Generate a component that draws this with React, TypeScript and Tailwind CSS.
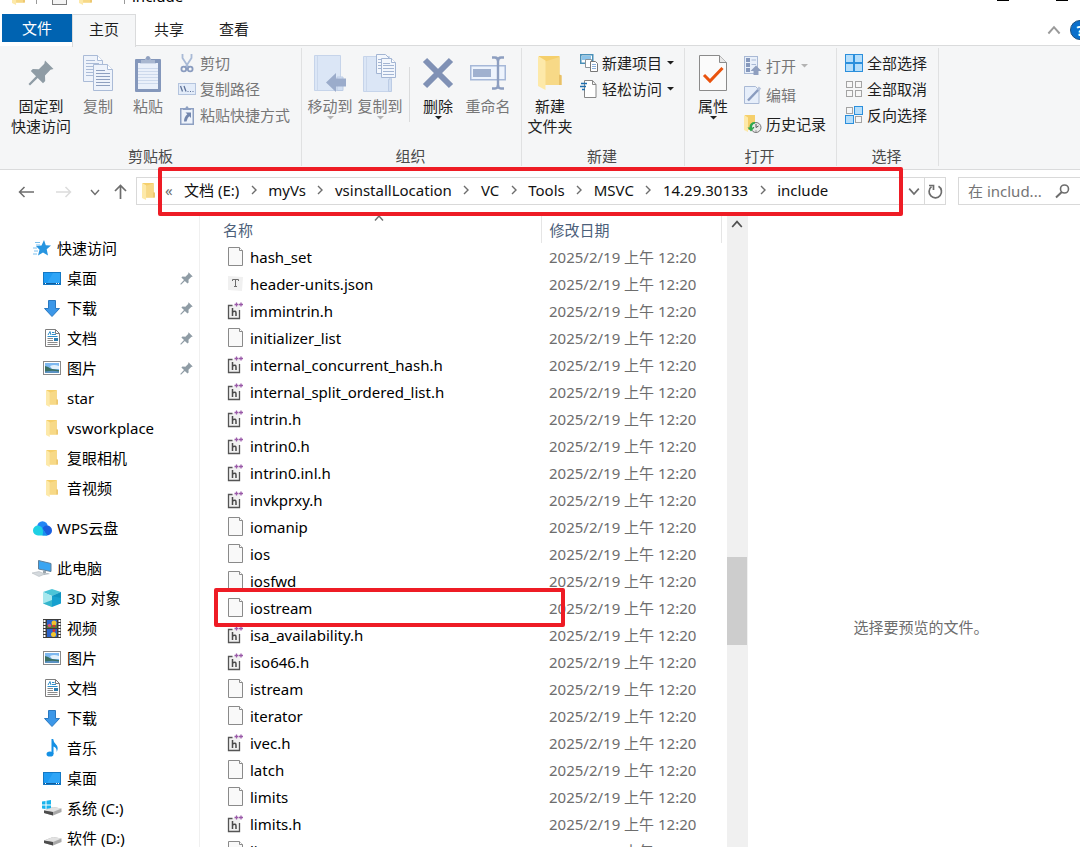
import type { ReactNode } from "react";

/* ---------- Icons ---------- */

function PinIcon({ size }: { size: number }) {
  return (
    <svg width={size} height={size} viewBox="0 0 26 26" className="shrink-0" aria-hidden="true">
      <path
        d="M17 0.5 25.5 9l-3 0.8-5.5 5.7 0.2 5.5-2.2 2.2-5.3-5.2L2 25.5 0.5 24 8 16.2 2.8 11l2-2 6 .3 5.5-5.5z"
        fill="#8f9ca5"
      />
    </svg>
  );
}

function CopyIcon() {
  return (
    <svg width="30" height="36" viewBox="0 0 30 36" aria-hidden="true">
      <g fill="#eef3fb" stroke="#aabbd7">
        <path d="M.5.5h14l5 5v21H.5z" />
        <path d="M14.5.5v5h5" fill="#fff" />
        <path d="M3 5.5h9M3 8.5h13M3 11.5h13M3 14.5h13M3 17.5h13M3 20.5h13" />
        <path d="M10.500 9.500h14l5 5v21h-19z" />
        <path d="M24.500 9.500v5h5" fill="#fff" />
        <path d="M13 15.500h9M13 18.500h14M13 21.500h14M13 24.500h14M13 27.500h14M13 30.500h14" stroke="#8ea0c0" />
      </g>
    </svg>
  );
}

function PasteIcon() {
  return (
    <svg width="26" height="37" viewBox="0 0 26 37" aria-hidden="true">
      <rect x="0" y="4" width="26" height="33" rx="1" fill="#8497bb" />
      <rect x="3" y="8" width="20" height="26" fill="#eaf0fa" />
      <path d="M3 13.500h20M3 16.500h20M3 19.500h20M3 22.500h20M3 25.500h20M3 28.500h20" stroke="#cdd9ec" />
      <path d="M6 8V5h4a3 3 0 1 1 6 0h4v3z" fill="#a9b7d0" />
      <path d="M5 8.500h16" stroke="#cfd9ea" />
      <circle cx="13" cy="3" r="2" fill="#8fa0c0" />
    </svg>
  );
}

function CutIcon() {
  return (
    <svg width="14" height="19" viewBox="0 0 14 19" aria-hidden="true">
      <path d="M2.500 0v4L9 14M11.500 0v4L5 14" fill="none" stroke="#a9bad6" strokeWidth="1.800" />
      <circle cx="3.800" cy="15" r="2.400" fill="none" stroke="#8a9cbf" strokeWidth="1.800" />
      <circle cx="10.200" cy="15" r="2.400" fill="none" stroke="#8a9cbf" strokeWidth="1.800" />
    </svg>
  );
}

function PathIcon() {
  return (
    <svg width="18" height="12" viewBox="0 0 18 12" aria-hidden="true">
      <rect x=".5" y=".5" width="17" height="11" fill="#e3ecf9" stroke="#b4c4de" />
      <path d="m2.500 3 2 5.500M6 3l2 5.500" stroke="#5f7399" strokeWidth="1.300" />
      <path d="M9.500 8.500h1M12 8.500h1M14.500 8.500h1" stroke="#5f7399" />
    </svg>
  );
}

function PasteShortcutIcon() {
  return (
    <svg width="14" height="19" viewBox="0 0 14 19" aria-hidden="true">
      <rect x=".75" y="2.750" width="12.500" height="15.500" fill="#eef3fb" stroke="#8ea0c2" strokeWidth="1.500" />
      <path d="M3 4V2.500h2.500C5.500-.5 8.500-.5 8.500 2.500H11V4z" fill="#8ea0c2" />
      <path d="M5.500 6.500H11V12L9.300 10.300Q7 12 6.500 15.500H4Q4 11 7.300 8.300z" fill="#7286ad" />
    </svg>
  );
}

function MoveToIcon() {
  return (
    <svg width="32" height="37" viewBox="0 0 32 37" aria-hidden="true">
      <path d="M.5.5h26v35H.5z" fill="#dbe6f6" stroke="#c6d4ea" />
      <path d="M3.500 1v34" stroke="#cbd8ec" />
      <path d="M23 22h6v13.500h-6z" fill="#d2dff2" stroke="#bccce5" />
      <path d="M12 27.500 22 18v5.500h10v8H22V37z" fill="#9baccb" />
    </svg>
  );
}

function CopyToIcon() {
  return (
    <svg width="34" height="38" viewBox="0 0 34 38" aria-hidden="true">
      <path d="M.5 2.500h26v35H.5z" fill="#dbe6f6" stroke="#c6d4ea" />
      <path d="M3.500 3v34" stroke="#cbd8ec" />
      <path d="M25.500 25.500l3-1v13h-3z" fill="#d2dff2" stroke="#bccce5" />
      <g fill="#f3f7fd" stroke="#a3b5d3">
        <path d="M13.500.5h9l4 4v15h-13z" />
        <path d="M15 5.500h5M15 8.500h9M15 11.500h9M15 14.500h9" />
        <path d="M18.500 4.500h10l4 4v15h-14z" />
        <path d="M28.500 4.500v4h4" fill="#fff" />
        <path d="M20 9.500h7M20 11.500h11M20 14.500h11M20 17.500h11M20 20.500h11" />
      </g>
    </svg>
  );
}

function DeleteIcon() {
  return (
    <svg width="32" height="32" viewBox="0 0 32 32" aria-hidden="true">
      <path d="m3 3 26 26M29 3 3 29" stroke="#8091b5" strokeWidth="6" />
    </svg>
  );
}

function RenameIcon() {
  return (
    <svg width="36" height="34" viewBox="0 0 36 34" aria-hidden="true">
      <rect x=".75" y="9.750" width="34.500" height="14" fill="#eef4fd" stroke="#a6b8d8" strokeWidth="1.500" />
      <rect x="3" y="13" width="18" height="8" fill="#a0b1cf" />
      <path d="M22 1.500h3q3 0 3 4v23q0 4-3 4h-3M34 1.500h-3q-3 0-3 4v23q0 4 3 4h3" fill="none" stroke="#8d9ec0" strokeWidth="2.400" />
    </svg>
  );
}

function FolderIcon({ width, height }: { width: number; height: number }) {
  return (
    <svg width={width} height={height} viewBox="0 0 24 34" preserveAspectRatio="none" className="shrink-0" aria-hidden="true">
      <path d="M1 0h20.500v18l2 2v9H1z" fill="#f5cf6b" />
      <path d="M7 5.500 21.500 1v28H7z" fill="#f7d987" />
      <path d="M21 19h2.500v10H21z" fill="#e8c069" />
      <path d="M0 0l7.500 4.500V34L0 30z" fill="#fde9a9" />
    </svg>
  );
}

function NewItemIcon() {
  return (
    <svg width="18" height="18" viewBox="0 0 18 18" aria-hidden="true">
      <rect x=".75" y=".75" width="12" height="8.500" fill="#fff" stroke="#4a90b8" strokeWidth="1.500" />
      <rect x="2" y="2" width="9" height="4" fill="#8cc4ea" />
      <path d="M5.500 5.500h6v8h-6z" fill="#fff" stroke="#8d9499" />
      <path d="M10.500 7.500h5l2 2v8h-7z" fill="#fff" stroke="#777" />
      <path d="M12 10.500h4M12 12.500h4M12 14.500h4" stroke="#8ab0dc" />
    </svg>
  );
}

function EasyAccessIcon() {
  return (
    <svg width="18" height="18" viewBox="0 0 18 18" aria-hidden="true">
      <path d="M4.500.5h8l3.500 4v13H4.500z" fill="#fff" stroke="#868686" />
      <path d="M12.500.5v4h3.500" fill="none" stroke="#868686" />
      <path d="M1 3.500h6M0 6.500h6M2 9.500h3" stroke="#1f6fb0" strokeWidth="1.300" />
    </svg>
  );
}

function PropertiesIcon() {
  return (
    <svg width="28" height="36" viewBox="0 0 28 36" aria-hidden="true">
      <path d="M.5.5h20l7 7v28H.5z" fill="#fbfbfb" stroke="#8b8b8b" />
      <path d="M20.500.5v7h7" fill="#e8e8e8" stroke="#8b8b8b" />
      <path d="m5 20 6 6L23.500 13" fill="none" stroke="#e9530e" strokeWidth="3" />
    </svg>
  );
}

function OpenIcon() {
  return (
    <svg width="18" height="19" viewBox="0 0 18 19" aria-hidden="true">
      <rect x=".5" y=".5" width="13" height="17" fill="#e9f0fa" stroke="#a9b9d5" />
      <path d="M2 2h4v4H2zM2 7h4v4H2zM2 12h4v4H2z" fill="#8699bd" />
      <path d="M7.500 4h4.500M7.500 8.500h4.500" stroke="#a9b9d5" />
      <path d="m12 9.500 5.500 5.500h-3v4h-5v-4h-3z" fill="#8f9fbf" />
    </svg>
  );
}

function EditIcon() {
  return (
    <svg width="18" height="18" viewBox="0 0 18 18" aria-hidden="true">
      <path d="M.5.500h11l3.500 3.500v13.500H.5z" fill="#e6eefa" stroke="#a9b9d5" />
      <path d="M4 14.500 14.500 3.500" stroke="#8a9cbf" strokeWidth="2.500" />
      <path d="m14 4 2-2.500" stroke="#b8c5dc" strokeWidth="3" />
    </svg>
  );
}

function HistoryIcon() {
  return (
    <svg width="18" height="18" viewBox="0 0 18 18" aria-hidden="true">
      <path d="M1 0h10v15H1z" fill="#f5cf6b" />
      <path d="M0 0l4 2.500V17L0 15z" fill="#fde9a9" />
      <circle cx="12" cy="12.500" r="5" fill="#e8e8e8" stroke="#777" />
      <path d="M12 9v3.500l2.500-1.500M9 12.500h1M12 15.500v1" fill="none" stroke="#555" />
      <path d="M11 7Q5.500 7 5.500 12.500H3.500L7 16.500l3.500-4H8Q8 9 11 8.500z" fill="#2fa84f" />
    </svg>
  );
}

function SquaresIcon({ on, all }: { on: boolean[]; all?: boolean }) {
  const spots = [
    [0, 0],
    [9, 0],
    [0, 9],
    [9, 9],
  ];
  return (
    <svg width="18" height="18" viewBox="0 0 18 18" aria-hidden="true">
      {spots.map(([x, y], i) =>
        on[i] ? (
          <rect key={i} x={x + 0.5} y={y + 0.5} width="8" height="8" fill="#b5defb" stroke="#2b8fdc" />
        ) : (
          <rect key={i} x={x + 1.5} y={y + 1.5} width="6" height="6" fill="#f7f7f7" stroke="#a3a3a3" />
        ),
      )}
      {all && <path d="M9 0v18M0 9h18" stroke="#2b8fdc" strokeWidth="2" />}
    </svg>
  );
}

function StarIcon() {
  return (
    <svg width="18" height="16" viewBox="0 0 18 16" aria-hidden="true">
      <path d="m11 0 1.800 5.300L18 5.500l-4.300 3.700L15 15.500l-5-3-5 3 1.500-5.700L3 6l5.500-.5z" fill="#2795e0" />
      <path d="M2 2.500h5M3 5h4M0 8h4M1 11h4M0 14h4" stroke="#7cc0ee" />
    </svg>
  );
}

function DesktopIcon() {
  return (
    <svg width="18" height="13" viewBox="0 0 18 13" aria-hidden="true">
      <rect x=".5" y=".5" width="17" height="12" fill="#1e9bf3" stroke="#1478c4" />
      <path d="M10 1 4 11h13V1z" fill="#3fb0fb" opacity=".5" />
      <path d="M1 11.500h16" stroke="#0f5c9c" />
      <path d="M2 11.500h1M13 11.500h1M15 11.500h1" stroke="#fff" />
    </svg>
  );
}

function DownloadIcon() {
  return (
    <svg width="16" height="17" viewBox="0 0 16 17" aria-hidden="true">
      <path d="M4.500.5h7v8h4L8 16.500.5 8.500h4z" fill="#3b97e8" stroke="#2a78c0" />
    </svg>
  );
}

function DocumentIcon() {
  return (
    <svg width="15" height="18" viewBox="0 0 15 18" aria-hidden="true">
      <path d="M.5.5h10l4 4v13H.5z" fill="#fff" stroke="#7d7d7d" />
      <path d="M10.500.5v4h4" fill="none" stroke="#7d7d7d" />
      <path d="m3 6 2-3.500L6 6M7 3.500h2.500M7 5.500h4M2.500 7.500h10" fill="none" stroke="#2f8ec9" />
      <path d="M2.500 9.500H8M2.500 11.500H8M2.500 13.500h10M2.500 15.500h10" stroke="#8b8b8b" />
      <path d="M9 9h4v3H9z" fill="#2f7fb2" />
    </svg>
  );
}

function PictureIcon() {
  return (
    <svg width="18" height="14" viewBox="0 0 18 14" aria-hidden="true">
      <rect x=".5" y=".5" width="17" height="13" fill="#fff" stroke="#8a8a8a" />
      <rect x="2" y="2" width="14" height="10" fill="#7db8f0" />
      <path d="M7 5q4-2 9 0v3H9z" fill="#e3f1fc" />
      <path d="M2 5q3 .5 6 2.800l8 1.200v3H2z" fill="#3b6f62" />
      <path d="M2 10.500q8-1.500 14 0V12H2z" fill="#5b93c4" />
    </svg>
  );
}

function CloudIcon() {
  return (
    <svg width="19" height="15" viewBox="0 0 19 15" aria-hidden="true">
      <circle cx="9.500" cy="5.500" r="5.300" fill="#2186f5" />
      <circle cx="14" cy="9.500" r="5" fill="#1a5fe0" />
      <path d="M5 4.500a5 5 0 0 0 0 10h9L8.500 6A5 5 0 0 0 5 4.500z" fill="#1ed0e4" />
      <path d="M8.500 6 14 14.500H9.500Q11 10 8.500 6z" fill="#1a8df0" />
    </svg>
  );
}

function ComputerIcon() {
  return (
    <svg width="20" height="17" viewBox="0 0 20 17" aria-hidden="true">
      <path d="m6.500.5 12.500 3v8l-12.500-2.500z" fill="#3aa5f2" stroke="#5f7f99" />
      <path d="m11 10.500 3 .7v2h-3z" fill="#9aa5ad" />
      <path d="m10 13.500 6-.5 2 1-6 1z" fill="#b5bdc3" />
      <path d="m0 13 7-1.500 6 2.500-6 2.500z" fill="#d4d9dd" stroke="#a8b0b6" strokeWidth=".5" />
    </svg>
  );
}

function CubeIcon() {
  return (
    <svg width="18" height="18" viewBox="0 0 18 18" aria-hidden="true">
      <path d="m9 0 9 3-9 4-9-4z" fill="#4cc5d8" />
      <path d="M0 3l9 4v11l-9-3.500z" fill="#a7e8ee" />
      <path d="m18 3-9 4v11l9-3.500z" fill="#16a0cf" />
      <path d="m9 7 9-4v6z" fill="#0b8bb5" opacity=".6" />
      <path d="m0 14.500 9-3.500v7z" fill="#35b5cc" />
    </svg>
  );
}

function VideoIcon() {
  return (
    <svg width="18" height="19" viewBox="0 0 18 19" aria-hidden="true">
      <rect width="18" height="19" fill="#3b3b3b" />
      <path d="M1.500 1v18M16.500 1v18" stroke="#fff" strokeWidth="2" strokeDasharray="2 1" />
      <path d="M4 1h10v8H4zM4 10h10v8H4z" fill="#2b62c9" />
      <path d="M4 6h10v3H4z" fill="#5a7d35" />
      <circle cx="11" cy="4" r="2.500" fill="#f2c62e" />
      <circle cx="6.500" cy="6.500" r="1.700" fill="#d94f7a" />
      <circle cx="11" cy="7" r="1.300" fill="#d8322a" />
      <circle cx="10.500" cy="15.500" r="2.500" fill="#f2c62e" />
      <circle cx="11" cy="11.500" r="1.500" fill="#d8322a" />
    </svg>
  );
}

function MusicIcon() {
  return (
    <svg width="13" height="18" viewBox="0 0 13 18" aria-hidden="true">
      <ellipse cx="4" cy="15" rx="3.500" ry="2.600" fill="#1490e4" />
      <path d="M5.500 15V0H7.200Q7.500 3.500 10 5.500q3 3 .7 7.500Q11 8.500 7.500 7.500V15z" fill="#1490e4" />
    </svg>
  );
}

function DriveIcon({ system }: { system?: boolean }) {
  return (
    <svg width="20" height="16" viewBox="0 0 20 16" aria-hidden="true">
      <path d="m2 10.500 9-3.500 8.500 1.500V12L11 15.500 2 13z" fill="#a9a9a9" />
      <path d="m2 10.500 9-3.500 8.500 1.500L11 12z" fill="#e2e2e2" />
      <path d="m2 10.500 9 1.500v3.500L2 13z" fill="#4c4c4c" />
      {system && <path d="M0 1.500 3.500 1v3.500H0zM4.500.8 9 0v4.500H4.500zM0 5.500h3.500V9L0 8.500zM4.500 5.500H9V8L4.500 9z" fill="#1ab4ec" />}
    </svg>
  );
}

function PlainFileIcon() {
  return (
    <svg width="15" height="19" viewBox="0 0 15 19" aria-hidden="true">
      <path d="M.5.5h11l3 3v15H.5z" fill="#f9f9f9" stroke="#8a8a8a" />
      <path d="M11.500.5v3h3" fill="#fff" stroke="#8a8a8a" />
    </svg>
  );
}

function JsonFileIcon() {
  return (
    <svg width="17" height="17" viewBox="0 0 17 17" aria-hidden="true">
      <path d="m1 1 15 1-1 14-14-1z" fill="#f0f0f0" />
      <path d="M5.500 6V4.500h6V6M8.500 4.500v7M7 11.500h3" fill="none" stroke="#6c6c6c" />
    </svg>
  );
}

function HeaderFileIcon() {
  return (
    <svg width="16" height="18" viewBox="0 0 16 18" aria-hidden="true">
      <path d="M1 3h12v14H1z" fill="#f1f1f1" />
      <path d="M5.500 3.500h-4v13h11V8" fill="none" stroke="#555555" strokeWidth="1.300" />
      <path d="M5.500 6v8M5.500 10q3.500-2 3.500 1v3" fill="none" stroke="#4a4a4a" strokeWidth="1.500" />
      <path d="M7.500 2.500h4M9.500.5v4M12 2.500h4M14 .5v4" stroke="#9a5aa8" strokeWidth="1.300" />
    </svg>
  );
}

function Chevron({ dir, size = 10, color = "#6d6d6d" }: { dir: "up" | "down" | "right"; size?: number; color?: string }) {
  const d = { up: "M1 7.500 5 3l4 4.500", down: "M1 3l4 4.500L9 3", right: "M3 1l4 4-4 4" }[dir];
  return (
    <svg width={size} height={size} viewBox="0 0 10 10" className="shrink-0" aria-hidden="true">
      <path d={d} fill="none" stroke={color} strokeWidth="1.400" />
    </svg>
  );
}

function Caret({ dim }: { dim?: boolean }) {
  return (
    <svg width="7" height="4" viewBox="0 0 7 4" className="shrink-0" aria-hidden="true">
      <path d="M0 0h7L3.500 3.500z" fill={dim ? "#b3b3b3" : "#1e1e1e"} />
    </svg>
  );
}

/* ---------- Ribbon ---------- */

function BigButton({ icon, lines, width, dim, caret }: { icon: ReactNode; lines: string[]; width: string; dim?: boolean; caret?: boolean }) {
  return (
    <button type="button" className={`flex shrink-0 flex-col items-center ${width} ${dim ? "text-[#777777]" : "text-[#1e1e1e]"}`}>
      <span className="flex h-10 items-center justify-center">{icon}</span>
      <span className="mt-[3px] flex flex-col leading-5 whitespace-nowrap">
        {lines.map((line) => (
          <span key={line}>{line}</span>
        ))}
      </span>
      {caret && <Caret dim={dim} />}
    </button>
  );
}

function SmallButton({ icon, label, dim, caret, tall }: { icon: ReactNode; label: string; dim?: boolean; caret?: boolean; tall?: boolean }) {
  return (
    <button type="button" className={`flex items-center whitespace-nowrap ${tall ? "h-[29px]" : "h-[26px]"} ${dim ? "text-[#777777]" : "text-[#1e1e1e]"}`}>
      <span className="mr-1 flex w-[18px] justify-center">{icon}</span>
      <span className="mr-[5px]">{label}</span>
      {caret && <Caret dim={dim} />}
    </button>
  );
}

function Group({ label, width, children }: { label: string; width: string; children: ReactNode }) {
  return (
    <section aria-label={label} className={`flex shrink-0 flex-col border-r border-[#e0e1e2] ${width}`}>
      <div className="flex flex-1">{children}</div>
      <h2 className="pr-[2px] text-center leading-5 text-[#4a4a4a]">{label}</h2>
    </section>
  );
}

function Ribbon() {
  return (
    <div className="flex h-[124px] shrink-0 border-b border-[#dadbdc] bg-[#f5f6f7] pt-[2px] pb-[3px] pl-[2px]">
      <Group label="剪贴板" width="w-[300px]">
        <div className="flex pt-[5px] pl-[5px]">
          <BigButton icon={<PinIcon size={26} />} lines={["固定到", "快速访问"]} width="w-[68px]" />
          <BigButton icon={<CopyIcon />} lines={["复制"]} width="w-[46px]" dim />
          <BigButton icon={<PasteIcon />} lines={["粘贴"]} width="w-[54px]" dim />
        </div>
        <div className="ml-[3px] flex flex-col pt-[2px]">
          <SmallButton icon={<CutIcon />} label="剪切" dim />
          <SmallButton icon={<PathIcon />} label="复制路径" dim />
          <SmallButton icon={<PasteShortcutIcon />} label="粘贴快捷方式" dim />
        </div>
      </Group>
      <Group label="组织" width="w-[220px]">
        <div className="flex pt-[5px] pl-[3px]">
          <BigButton icon={<MoveToIcon />} lines={["移动到"]} width="w-[50px]" dim caret />
          <BigButton icon={<CopyToIcon />} lines={["复制到"]} width="w-[50px]" dim caret />
          <div className="mr-[3px] ml-1 mt-[14px] h-[55px] w-px bg-[#dadbdc]" />
          <BigButton icon={<DeleteIcon />} lines={["删除"]} width="w-[50px]" caret />
          <BigButton icon={<RenameIcon />} lines={["重命名"]} width="w-[50px]" dim />
        </div>
      </Group>
      <Group label="新建" width="w-[163px]">
        <div className="flex pt-[5px] pl-[2px]">
          <BigButton icon={<FolderIcon width={24} height={34} />} lines={["新建", "文件夹"]} width="w-[52px]" />
        </div>
        <div className="ml-1 flex flex-col pt-[2px]">
          <SmallButton icon={<NewItemIcon />} label="新建项目" caret />
          <SmallButton icon={<EasyAccessIcon />} label="轻松访问" caret />
        </div>
      </Group>
      <Group label="打开" width="w-[152px]">
        <div className="flex pt-[5px] pl-1">
          <BigButton icon={<PropertiesIcon />} lines={["属性"]} width="w-[48px]" caret />
        </div>
        <div className="ml-[7px] flex flex-col pt-[3px]">
          <SmallButton icon={<OpenIcon />} label="打开" dim caret tall />
          <SmallButton icon={<EditIcon />} label="编辑" dim tall />
          <SmallButton icon={<HistoryIcon />} label="历史记录" tall />
        </div>
      </Group>
      <Group label="选择" width="w-[102px]">
        <div className="ml-2 flex flex-col pt-[2px]">
          <SmallButton icon={<SquaresIcon on={[true, true, true, true]} all />} label="全部选择" />
          <SmallButton icon={<SquaresIcon on={[false, false, false, false]} />} label="全部取消" />
          <SmallButton icon={<SquaresIcon on={[false, true, true, false]} />} label="反向选择" />
        </div>
      </Group>
    </div>
  );
}

/* ---------- Title and tabs ---------- */

function TitleBar() {
  return (
    <header className="flex h-[14px] shrink-0 items-end overflow-hidden">
      <div className="flex h-9 w-full shrink-0 items-center pl-3 text-black">
        <FolderIcon width={13} height={17} />
        <span className="ml-[11px] h-4 w-px bg-[#9a9a9a]" />
        <span className="ml-[15px] h-[18px] w-[15px] border border-[#7d7d7d] bg-[#f4f4f4]" />
        <span className="ml-3">
          <FolderIcon width={13} height={17} />
        </span>
        <span className="ml-8 h-4 w-px bg-[#9a9a9a]" />
        <h1 className="ml-[7px] leading-5">include</h1>
        <span className="mr-[47px] ml-auto mt-[9px] h-px w-3 bg-black" />
        <span className="mr-3 h-[10px] w-3 border border-black" />
      </div>
    </header>
  );
}

function Tabs() {
  return (
    <nav aria-label="功能区" className="flex h-8 shrink-0 pl-[2px]">
      <button type="button" className="h-7 w-[70px] bg-[#0063b1] text-white">
        文件
      </button>
      <button type="button" className="z-10 -mb-px w-[64px] border border-b-0 border-[#dadbdc] bg-[#f5f6f7] pb-1 text-[#1e1e1e]">
        主页
      </button>
      <div className="flex flex-1 items-center border-b border-[#dadbdc] text-[#1e1e1e]">
        <button type="button" className="w-[66px] pb-[2px]">
          共享
        </button>
        <button type="button" className="w-[64px] pb-[2px]">
          查看
        </button>
        <button type="button" aria-label="最小化功能区" className="mr-[9px] ml-auto">
          <Chevron dir="up" size={14} color="#9a9a9a" />
        </button>
        <button type="button" aria-label="帮助" className="-mr-[10px] flex h-5 w-5 shrink-0 items-center justify-center rounded-full border border-[#1b4f7d] bg-[#0a6fcb] font-bold text-white">
          ?
        </button>
      </div>
    </nav>
  );
}

/* ---------- Address row ---------- */

const crumbs = ["文档 (E:)", "myVs", "vsinstallLocation", "VC", "Tools", "MSVC", "14.29.30133", "include"];

function AddressRow() {
  return (
    <div className="flex h-[46px] shrink-0 items-start pt-[7px]">
      <div className="flex h-[29px] w-[136px] shrink-0 items-center pl-[18px]">
        <button type="button" aria-label="后退">
          <svg width="16" height="12" viewBox="0 0 16 12" aria-hidden="true">
            <path d="M16 6H1.500M6.500 1l-5 5 5 5" fill="none" stroke="#6d6d6d" strokeWidth="1.500" />
          </svg>
        </button>
        <button type="button" aria-label="前进" className="ml-[22px]">
          <svg width="16" height="12" viewBox="0 0 16 12" aria-hidden="true">
            <path d="M0 6h14.500M9.500 1l5 5-5 5" fill="none" stroke="#dcdcdc" strokeWidth="1.500" />
          </svg>
        </button>
        <button type="button" aria-label="最近位置" className="ml-[18px]">
          <Chevron dir="down" />
        </button>
        <button type="button" aria-label="上一级" className="ml-[14px]">
          <svg width="13" height="15" viewBox="0 0 13 15" aria-hidden="true">
            <path d="M6.500 15V1.500M1 7l5.500-5.500L12 7" fill="none" stroke="#6d6d6d" strokeWidth="1.700" />
          </svg>
        </button>
      </div>
      <div className="relative flex h-7 min-w-0 flex-1 items-center border border-[#d9d9d9] pl-[5px]">
        <FolderIcon width={13} height={17} />
        <ol className="flex items-center pb-[2px] whitespace-nowrap text-[#111111]">
          <li className="ml-[10px] w-[19px] text-[#6d6d6d]">«</li>
          {crumbs.map((name, i) => (
            <li key={name} className="flex items-center">
              {i > 0 && (
                <span className="flex w-[29px] justify-center">
                  <Chevron dir="right" />
                </span>
              )}
              <a href="#">{name}</a>
            </li>
          ))}
        </ol>
        <button type="button" aria-label="历史" className="ml-auto flex w-5 justify-center">
          <Chevron dir="down" size={12} />
        </button>
        <button type="button" aria-label="刷新" className="flex h-full w-[21px] items-center justify-center border-l border-[#d9d9d9]">
          <svg width="15" height="15" viewBox="0 0 15 15" aria-hidden="true">
            <path d="M10.500 2.300A6.200 6.200 0 1 1 3.500 2.700" fill="none" stroke="#6d6d6d" strokeWidth="1.700" />
            <path d="M1 1.500h4.500V6" fill="none" stroke="#6d6d6d" strokeWidth="1.700" />
          </svg>
        </button>
        <div className="pointer-events-none absolute -top-[11px] right-[42px] -bottom-[12px] left-[21px] z-10 rounded-[2px] border-4 border-[#ee1c25]" />
      </div>
      <div className="ml-3 flex h-7 w-[122px] shrink-0 items-center border border-r-0 border-[#d9d9d9] pl-[9px]">
        <input aria-label="搜索" placeholder="在 includ..." className="w-[87px] bg-transparent outline-none placeholder:text-[#757575]" />
        <svg width="15" height="15" viewBox="0 0 15 15" className="shrink-0" aria-hidden="true">
          <circle cx="9.500" cy="5" r="4" fill="none" stroke="#6d6d6d" strokeWidth="1.600" />
          <path d="M6.800 8 1 13.500" stroke="#6d6d6d" strokeWidth="2" />
        </svg>
      </div>
    </div>
  );
}

/* ---------- Sidebar ---------- */

const smallFolder = <FolderIcon width={12} height={17} />;

const quick: { icon: ReactNode; name: string; pinned?: boolean }[] = [
  { icon: <DesktopIcon />, name: "桌面", pinned: true },
  { icon: <DownloadIcon />, name: "下载", pinned: true },
  { icon: <DocumentIcon />, name: "文档", pinned: true },
  { icon: <PictureIcon />, name: "图片", pinned: true },
  { icon: smallFolder, name: "star" },
  { icon: smallFolder, name: "vsworkplace" },
  { icon: smallFolder, name: "复眼相机" },
  { icon: smallFolder, name: "音视频" },
];

const computer: { icon: ReactNode; name: string; pinned?: boolean }[] = [
  { icon: <CubeIcon />, name: "3D 对象" },
  { icon: <VideoIcon />, name: "视频" },
  { icon: <PictureIcon />, name: "图片" },
  { icon: <DocumentIcon />, name: "文档" },
  { icon: <DownloadIcon />, name: "下载" },
  { icon: <MusicIcon />, name: "音乐" },
  { icon: <DesktopIcon />, name: "桌面" },
  { icon: <DriveIcon system />, name: "系统 (C:)" },
  { icon: <DriveIcon />, name: "软件 (D:)" },
];

function TreeSection({ icon, name, items = [] }: { icon: ReactNode; name: string; items?: typeof quick }) {
  return (
    <li>
      <a href="#" className="flex h-[30px] items-center pl-8">
        <span className="mr-[5px] flex w-5 justify-center">{icon}</span>
        {name}
      </a>
      <ul>
        {items.map((item) => (
          <li key={item.name}>
            <a href="#" className="flex h-[30px] items-center pr-[6px] pl-[42px]">
              <span className="mr-[5px] flex w-5 justify-center">{item.icon}</span>
              <span className="flex-1">{item.name}</span>
              {item.pinned && <PinIcon size={13} />}
            </a>
          </li>
        ))}
      </ul>
    </li>
  );
}

function Sidebar() {
  return (
    <nav aria-label="导航窗格" className="w-[200px] shrink-0 overflow-hidden border-r border-[#f0f0f0] pt-[17px] whitespace-nowrap">
      <ul className="flex flex-col gap-[10px]">
        <TreeSection icon={<StarIcon />} name="快速访问" items={quick} />
        <TreeSection icon={<CloudIcon />} name="WPS云盘" />
        <TreeSection icon={<ComputerIcon />} name="此电脑" items={computer} />
      </ul>
    </nav>
  );
}

/* ---------- File list ---------- */

const files = [
  "hash_set",
  "header-units.json",
  "immintrin.h",
  "initializer_list",
  "internal_concurrent_hash.h",
  "internal_split_ordered_list.h",
  "intrin.h",
  "intrin0.h",
  "intrin0.inl.h",
  "invkprxy.h",
  "iomanip",
  "ios",
  "iosfwd",
  "iostream",
  "isa_availability.h",
  "iso646.h",
  "istream",
  "iterator",
  "ivec.h",
  "latch",
  "limits",
  "limits.h",
  "list",
];

function fileIcon(name: string) {
  if (name.endsWith(".json")) return <JsonFileIcon />;
  if (name.endsWith(".h")) return <HeaderFileIcon />;
  return <PlainFileIcon />;
}

function FileList() {
  return (
    <main className="flex shrink-0 overflow-hidden">
      <div className="overflow-hidden pr-[5px]">
        <table className="w-[522px] table-fixed border-collapse text-left whitespace-nowrap">
          <thead>
            <tr className="h-[27px] text-[#4c607a]">
              <th className="relative w-[341px] border-r border-[#e5e5e5] p-0 pl-[23px] font-normal">
                名称
                <span className="absolute -top-[3px] left-[174px]">
                  <Chevron dir="up" />
                </span>
              </th>
              <th className="border-r border-[#e5e5e5] p-0 pl-2 font-normal">修改日期</th>
            </tr>
          </thead>
          <tbody>
            {files.map((name) => (
              <tr key={name} className="h-[27px]">
                <td className="relative p-0 pl-[26px] text-black">
                  <span className="flex items-center">
                    <span className="mr-[6px] flex w-[18px] justify-center">{fileIcon(name)}</span>
                    {name}
                  </span>
                  {name === "iostream" && (
                    <span className="pointer-events-none absolute -top-[6px] -right-6 -bottom-[6px] left-[14px] z-10 rounded-[2px] border-4 border-[#ee1c25]" />
                  )}
                </td>
                <td className="p-0 pl-2 text-[#6d6d6d]">2025/2/19 上午 12:20</td>
              </tr>
            ))}
          </tbody>
        </table>
      </div>
      <div className="flex w-5 flex-col items-center bg-[#f0f0f0]">
        <span className="mt-[2px] mb-[327px]">
          <Chevron dir="up" size={12} color="#505050" />
        </span>
        <span className="h-[88px] w-full shrink-0 bg-[#cdcdcd]" />
      </div>
    </main>
  );
}

export default function App() {
  return (
    <div className="flex h-screen flex-col overflow-hidden bg-white font-['Noto_Sans','Noto_Sans_CJK_SC',sans-serif] text-[15px] leading-5">
      <TitleBar />
      <Tabs />
      <Ribbon />
      <AddressRow />
      <div className="flex min-h-0 flex-1">
        <Sidebar />
        <FileList />
        <aside className="flex flex-1 justify-center border-l border-[#f0f0f0] pt-[401px] pl-[14px] text-[#6d6d6d]">
          <p>选择要预览的文件。</p>
        </aside>
      </div>
    </div>
  );
}
